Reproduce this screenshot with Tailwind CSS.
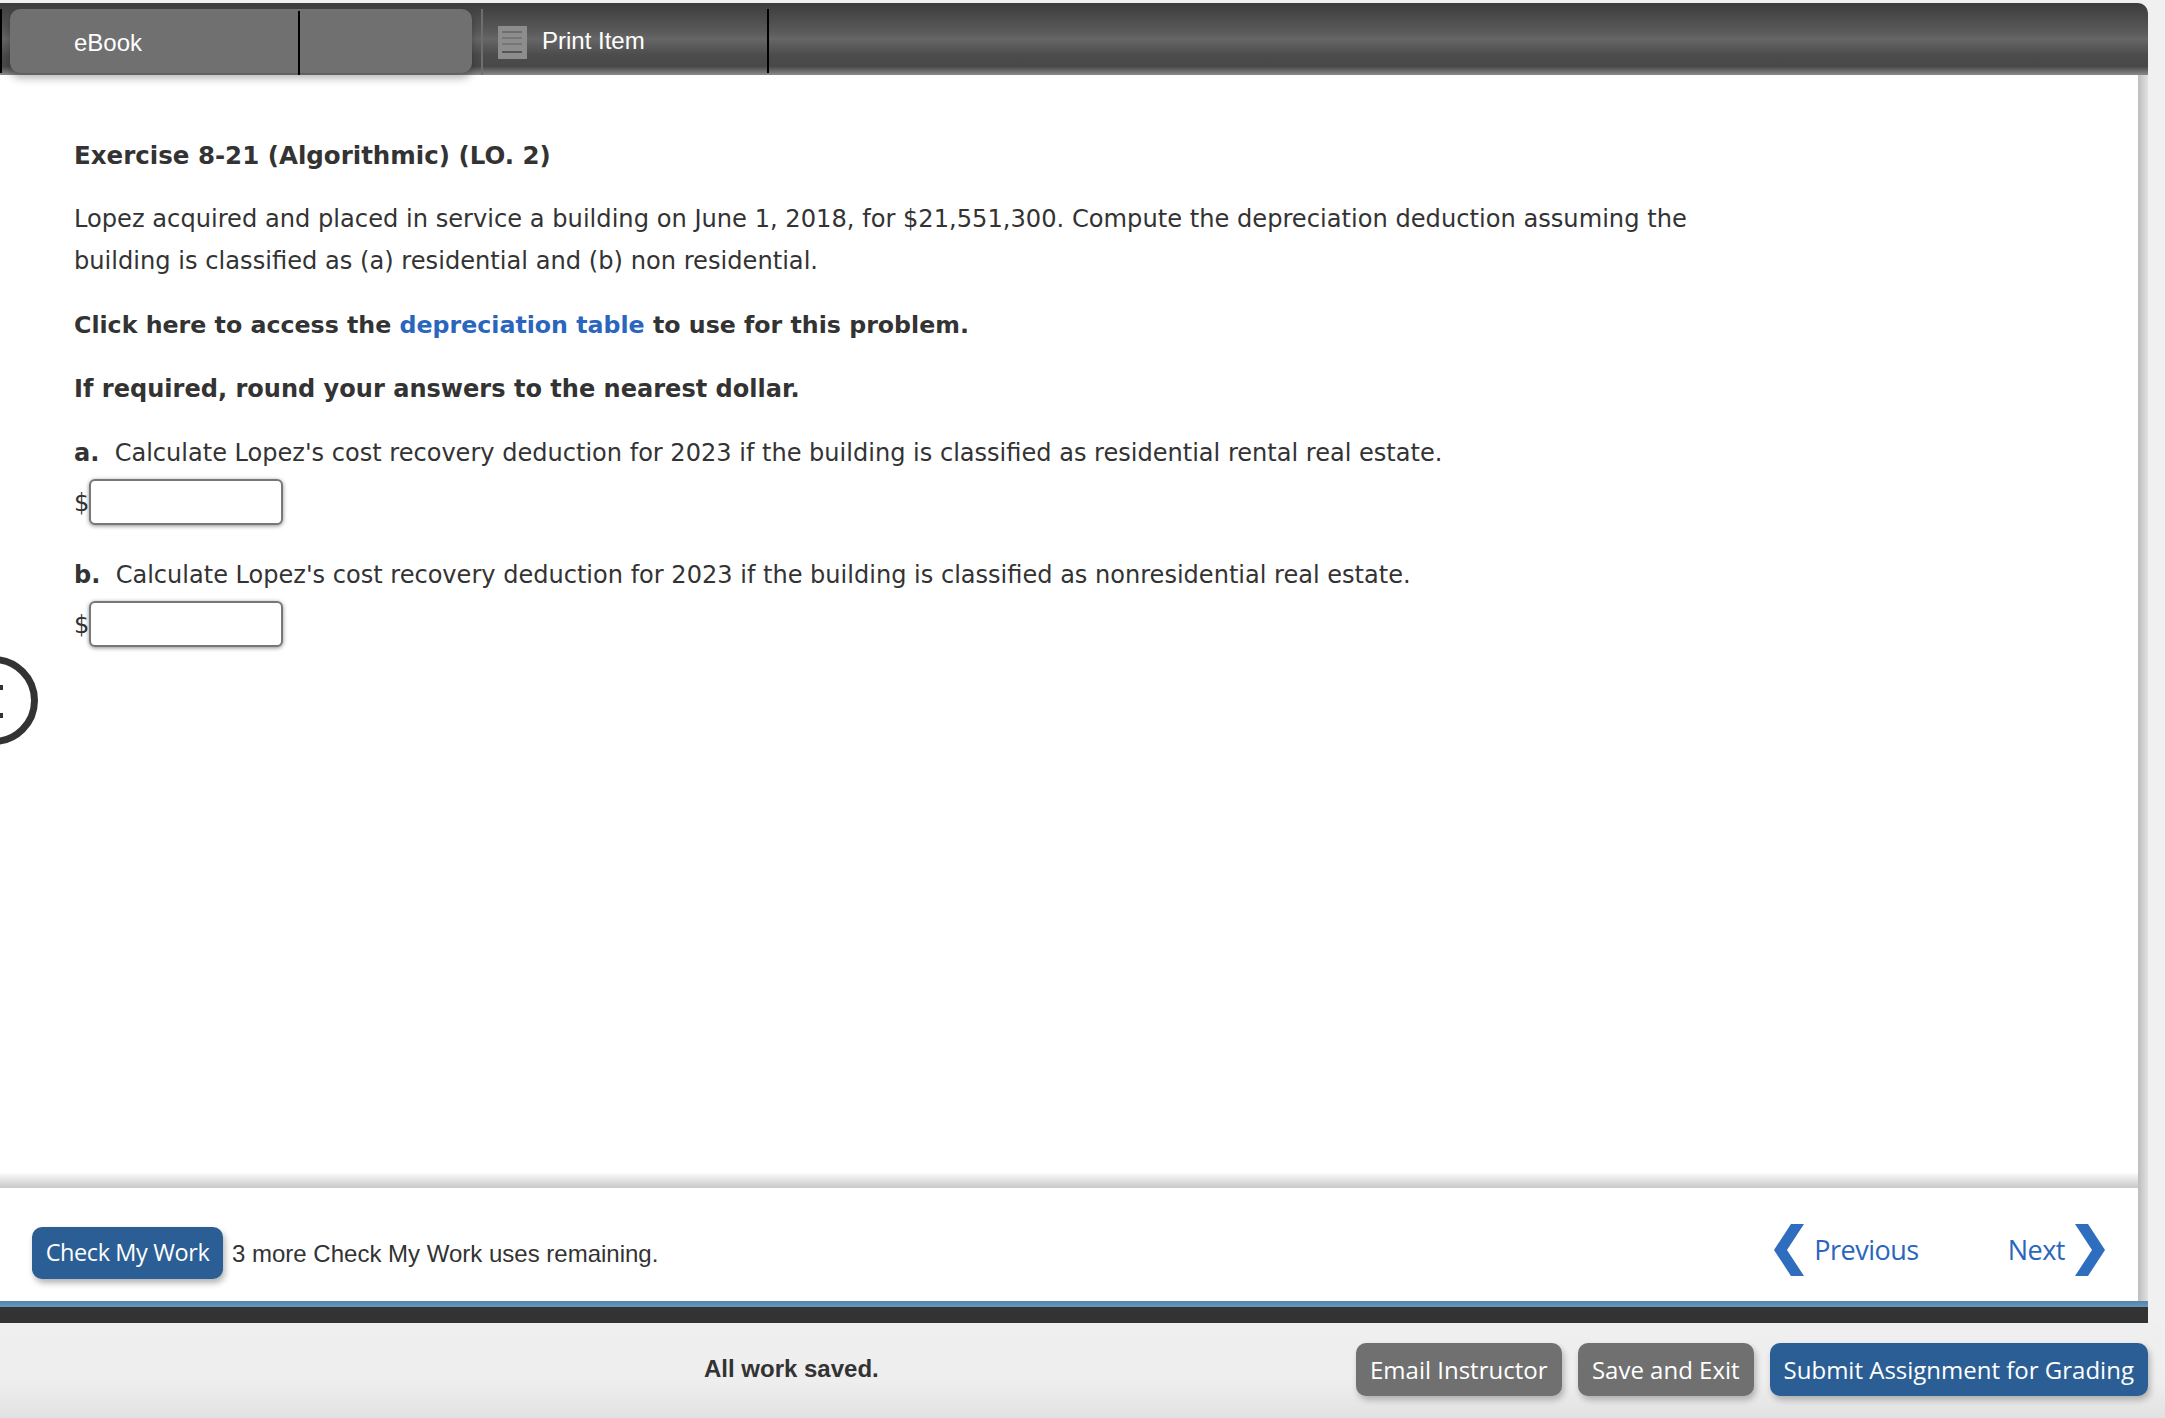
<!DOCTYPE html>
<html lang="en">
<head>
  <meta charset="UTF-8" />
  <title>Exercise 8-21</title>
  <script src="https://cdn.jsdelivr.net/npm/@tailwindcss/browser@4"></script>
</head>
<body class="relative w-[2165px] h-[1418px] overflow-hidden bg-[#f0f0f0] pt-[3px] flex flex-col font-['DejaVu_Sans',sans-serif] text-[#333]">
  <!-- top toolbar -->
  <header class="w-[2148px] h-[72px] shrink-0 rounded-tr-[10px] flex items-start bg-[linear-gradient(to_bottom,#3c3c3c_0%,#5a5a5a_40%,#666_50%,#4c4c4c_72%,#484848_88%,#8a8a8a_100%)] font-['Liberation_Sans',sans-serif] text-[24px] text-white">
    <div class="w-[2px] h-[64px] mt-[6px] mr-[8px] bg-black"></div>
    <div class="relative w-[462px] h-[64px] mt-[6px] rounded-[10px] bg-[#707070] shadow-[0_5px_8px_rgba(0,0,0,0.3)] flex items-center pl-[64px]">
      <span class="mt-[3px]">eBook</span>
      <div class="absolute left-[288px] top-[2px] w-[2px] h-[64px] bg-black"></div>
    </div>
    <div class="w-[2px] h-[66px] mt-[6px] ml-[9px] bg-[#6e6e6e]"></div>
    <div class="w-[286px] h-[64px] mt-[6px] flex items-center pl-[15px] gap-[15px] border-r-2 border-black">
      <svg width="29" height="33" viewBox="0 0 29 33" class="mt-[3px]">
        <rect width="29" height="33" fill="#8d8d8d" />
        <rect x="4" y="5" width="20" height="2" fill="#6e6e6e" />
        <rect x="4" y="11" width="20" height="2" fill="#767676" />
        <rect x="4" y="17" width="20" height="2" fill="#767676" />
        <rect x="4" y="25" width="20" height="2" fill="#555" />
      </svg>
      <span>Print Item</span>
    </div>
  </header>

  <div class="w-[2148px] flex flex-1 min-h-0">
    <main class="w-[2138px] bg-white flex flex-col">
      <section class="flex-1 pt-[60px] pl-[74px] text-[24.05px] leading-[42px]">
        <h1 class="font-bold text-[24.5px] mb-[21px]">Exercise 8-21 (Algorithmic) (LO. 2)</h1>
        <p class="w-[1680px] text-[24.15px] mb-[22px]">Lopez acquired and placed in service a building on June 1, 2018, for $21,551,300. Compute the depreciation deduction assuming the building is classified as (a) residential and (b) non residential.</p>
        <p class="font-bold text-[23.7px] mb-[22px]">Click here to access the <a class="text-[#2a66bd]">depreciation table</a> to use for this problem.</p>
        <p class="font-bold mb-[22px]">If required, round your answers to the nearest dollar.</p>
        <p><b>a.</b>&nbsp; Calculate Lopez's cost recovery deduction for 2023 if the building is classified as residential rental real estate.</p>
        <div class="flex items-center mt-[6px] mb-[30px] h-[44px]">
          <span class="w-[15px] mt-[2px]">$</span>
          <div class="w-[194px] h-[46px] rounded-[6px] border-2 border-[#777] bg-white shadow-[0_1px_4px_rgba(0,0,0,0.45)]"></div>
        </div>
        <p><b>b.</b>&nbsp; Calculate Lopez's cost recovery deduction for 2023 if the building is classified as nonresidential real estate.</p>
        <div class="flex items-center mt-[6px] h-[44px]">
          <span class="w-[15px] mt-[2px]">$</span>
          <div class="w-[194px] h-[46px] rounded-[6px] border-2 border-[#777] bg-white shadow-[0_1px_4px_rgba(0,0,0,0.45)]"></div>
        </div>
      </section>
      <div class="h-[16px] bg-gradient-to-b from-white to-[#c8c8c8]"></div>
      <div class="h-[113px] flex items-center pt-[17px] pl-[32px] pr-[33px]">
        <button class="w-[191px] h-[52px] rounded-[10px] bg-[#2b5e94] text-white font-['Open_Sans',sans-serif] text-[23.5px] tracking-[-0.4px] shadow-[2px_4px_6px_rgba(0,0,0,0.3)]">Check My Work</button>
        <span class="ml-[9px] mt-[2px] font-['Liberation_Sans',sans-serif] text-[24px]">3 more Check My Work uses remaining.</span>
        <div class="ml-auto flex items-center font-['Open_Sans',sans-serif] text-[27px] tracking-[-0.5px] text-[#2a66bd] -mt-[6px]">
          <svg width="30" height="52" viewBox="0 0 30 52"><polygon points="30,0 17,0 0,26 17,52 30,52 13,26" fill="#2f6dbf" /></svg>
          <span class="ml-[10px]">Previous</span>
          <span class="ml-[89px]">Next</span>
          <svg width="30" height="52" viewBox="0 0 30 52" class="ml-[10px]"><polygon points="0,0 13,0 30,26 13,52 0,52 17,26" fill="#2f6dbf" /></svg>
        </div>
      </div>
    </main>
    <div class="w-[10px] bg-gradient-to-r from-[#bdbdbd] to-[#e2e2e2]"></div>
  </div>

  <!-- blue strip + dark bar -->
  <div class="w-[2148px] h-[6px] shrink-0 bg-gradient-to-b from-[#4f83b3] to-[#6c97bb]"></div>
  <div class="w-[2148px] h-[16px] shrink-0 bg-[#333]"></div>

  <footer class="h-[95px] shrink-0 w-full flex items-center pb-[2px] bg-[linear-gradient(to_bottom,#efefef_0%,#eeeeee_60%,#e2e2e2_100%)] pl-[704px] font-['Open_Sans',sans-serif] text-[24px] text-white">
    <span class="font-['Liberation_Sans',sans-serif] font-bold text-[24px] text-[#333] -mt-[2px]">All work saved.</span>
    <button class="ml-[477px] w-[206px] h-[53px] rounded-[10px] bg-[#707070] shadow-[2px_4px_6px_rgba(0,0,0,0.25)]">Email Instructor</button>
    <button class="ml-[16px] w-[176px] h-[53px] rounded-[10px] bg-[#707070] shadow-[2px_4px_6px_rgba(0,0,0,0.25)]">Save and Exit</button>
    <button class="ml-[16px] w-[378px] h-[53px] rounded-[10px] bg-[#2b5e94] shadow-[2px_4px_6px_rgba(0,0,0,0.25)]">Submit Assignment for Grading</button>
  </footer>

  <!-- floating circle, cut off by the left edge -->
  <div class="absolute left-[-51px] top-[656px] w-[89px] h-[89px] rounded-full border-[7px] border-[#333]"></div>
  <div class="absolute left-0 top-[685px] w-[3px] h-[5px] bg-[#333]"></div>
  <div class="absolute left-0 top-[713px] w-[3px] h-[5px] bg-[#333]"></div>
</body>
</html>
